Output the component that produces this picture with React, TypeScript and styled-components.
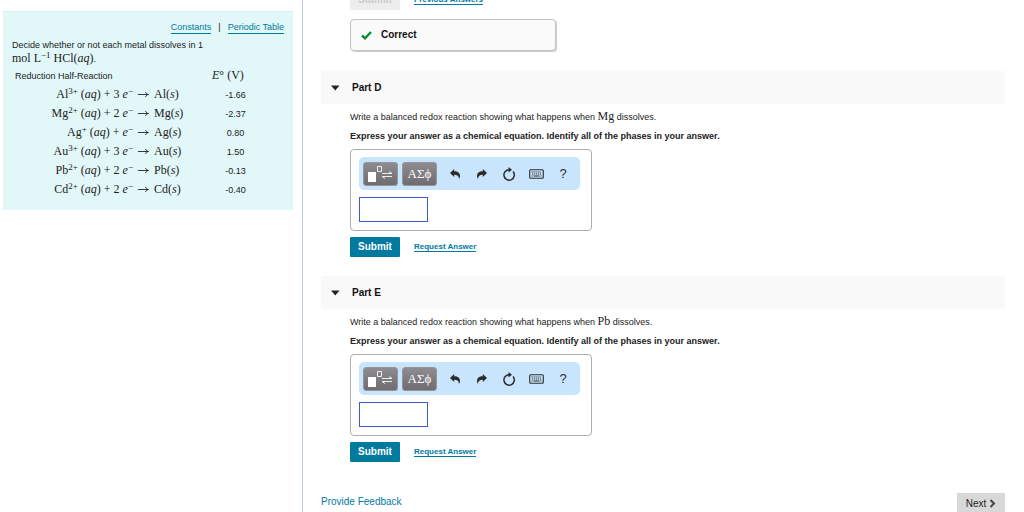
import React from "react";
import styled, { createGlobalStyle, css } from "styled-components";

const GlobalStyle = createGlobalStyle`
  *, *::before, *::after { box-sizing: border-box; }
  html, body, #root { height: 100%; }
  body {
    margin: 0;
    overflow: hidden;
    background: #fff;
    color: #222;
    font: 9px/12px "Liberation Sans", Arial, sans-serif;
  }
  button, input { font-family: inherit; }
`;

const teal = "#007a9f";

const Page = styled.div`
  display: flex;
  height: 100%;
`;

const Sidebar = styled.aside`
  flex: 0 0 303px;
  padding: 11px 9px 0 3px;
  border-right: 1px solid #b8cbdc;
`;

const InfoPanel = styled.section`
  padding: 10px 9px 11px;
  border-top: 1px solid #d5eeee;
  background: #e1f7f8;
`;

const Resources = styled.nav`
  display: flex;
  justify-content: flex-end;
  gap: 7px;
  line-height: 11px;
`;

const linkStyle = css`
  color: ${teal};
  text-decoration: none;
`;

const ResourceLink = styled.a`
  ${linkStyle}
  border-bottom: 1px solid ${teal};
`;

const Prompt = styled.p`
  margin: 5px 0 0;
  line-height: 13px;
`;

const Chem = styled.span`
  font-family: "Liberation Serif", "Times New Roman", serif;
  font-size: 12px;
  line-height: 12px;
  white-space: nowrap;

  sup {
    font-size: 9px;
    line-height: 0;
    vertical-align: 4px;
  }
`;

const Reactions = styled.table`
  width: 247px;
  border-collapse: collapse;
  table-layout: fixed;

  th, td {
    height: 19px;
    padding: 0;
    font-weight: normal;
  }
`;

const LabelHead = styled.th`
  && { padding-left: 3px; text-align: left; }
`;

const PotentialHead = styled.th`
  text-align: left;
`;

const Reactant = styled.td`
  text-align: right;
`;

const Arrow = styled.td`
  text-align: center;

  svg { display: block; margin: 0 auto; }
`;

const Product = styled.td`
  text-align: left;
`;

const Potential = styled.td`
  text-align: center;
`;

const Main = styled.main`
  flex: 1;
  min-width: 0;
  padding: 0 19px 0 18px;
`;

/* The column is scrolled: only the foot of the previous part shows. */
const Scrolled = styled.div`
  margin-top: -10px;
`;

const Indented = styled.div`
  padding-left: 29px;
`;

const Actions = styled.div`
  display: flex;
  align-items: center;
  gap: 14px;
`;

const SubmitButton = styled.button`
  width: 50px;
  height: 20px;
  padding: 0;
  border: 0;
  border-radius: 1px;
  background: ${teal};
  color: #fff;
  font-size: 10px;
  font-weight: bold;
  line-height: 20px;

  &:disabled {
    background: #ededed;
    color: #ccc;
  }
`;

const AnswerLink = styled.a`
  ${linkStyle}
  border-bottom: 1px solid ${teal};
  font-size: 8px;
  font-weight: bold;
  line-height: 8px;
`;

const Correct = styled.div`
  display: flex;
  align-items: center;
  gap: 9px;
  width: 206px;
  height: 32px;
  margin: 9px 0 20px;
  padding-left: 10px;
  border: 1px solid #c4c4c4;
  border-radius: 4px;
  box-shadow: 1px 1px 1px #ccc;
  background: #fafafa;
  color: #111;
  font-size: 10px;
  font-weight: bold;
`;

const PartHeader = styled.h2`
  display: flex;
  align-items: center;
  gap: 12px;
  height: 33px;
  margin: 0;
  padding-left: 10px;
  background: #f9f9f9;
  color: #111;
  font-size: 10px;
  font-weight: bold;
`;

const PartSection = styled.section`
  & + & { margin-top: 19px; }
`;

const Question = styled.p`
  margin: 6px 0 7px;
  line-height: 12px;
`;

const Instruction = styled.label`
  display: block;
  font-weight: bold;
  line-height: 12px;
`;

const Editor = styled.div`
  width: 242px;
  height: 82px;
  margin: 7px 0 6px;
  padding: 7px 11px 0 8px;
  border: 1px solid #adadad;
  border-radius: 4px;
`;

const Toolbar = styled.div`
  display: flex;
  align-items: center;
  gap: 4px;
  height: 33px;
  padding-left: 4px;
  border-radius: 5px;
  background: #c9e4fd;
`;

const PaletteButton = styled.button`
  display: flex;
  align-items: center;
  justify-content: center;
  width: 35px;
  height: 24px;
  padding: 0;
  border: 1px solid #969696;
  border-radius: 3px;
  background: linear-gradient(#8e8c90, #6e6c70);
  color: #fff;
  font-family: "Liberation Serif", serif;
  font-size: 13px;
`;

const Tools = styled.div`
  display: flex;
  align-items: center;
  gap: 3px;
  margin-left: 2px;
`;

const ToolButton = styled.button`
  display: flex;
  align-items: center;
  justify-content: center;
  width: 24px;
  height: 24px;
  padding: 0;
  border: 0;
  background: none;
  color: #2c2c2c;
  font-size: 13px;
`;

const AnswerInput = styled.input`
  display: block;
  width: 69px;
  height: 25px;
  margin-top: 7px;
  padding: 0 4px;
  border: 1px solid #3c5ccf;
  background: #fff;
  font-size: 11px;
`;

const Footer = styled.footer`
  display: flex;
  align-items: flex-start;
  justify-content: space-between;
  margin-top: 31px;
`;

const Feedback = styled.a`
  ${linkStyle}
  margin-top: 3px;
  font-size: 10px;
`;

const NextButton = styled.button`
  display: flex;
  align-items: center;
  justify-content: center;
  gap: 3px;
  width: 48px;
  height: 20px;
  padding: 0;
  border: 0;
  border-radius: 1px;
  background: #d8d8d8;
  color: #222;
  font-size: 10px;
`;

type Half = { metal: string; charge: string; electrons: string; volts: string };

const reactions: Half[] = [
  { metal: "Al", charge: "3+", electrons: "3 ", volts: "-1.66" },
  { metal: "Mg", charge: "2+", electrons: "2 ", volts: "-2.37" },
  { metal: "Ag", charge: "+", electrons: "", volts: "0.80" },
  { metal: "Au", charge: "3+", electrons: "3 ", volts: "1.50" },
  { metal: "Pb", charge: "2+", electrons: "2 ", volts: "-0.13" },
  { metal: "Cd", charge: "2+", electrons: "2 ", volts: "-0.40" },
];

const TemplateIcon = () => (
  <svg width="27" height="18" viewBox="0 0 27 18" fill="none" aria-hidden="true">
    <path d="M1 7h8v10H1z" fill="#fff" />
    <path d="M10.500 1.500h4v5h-4z" stroke="#eee" />
    <path d="M15 8.500h10l-3-2M25 11.500H15l3 2" stroke="#eee" />
  </svg>
);

const ArrowIcon = ({ redo = false }: { redo?: boolean }) => (
  <svg width="12" height="12" viewBox="0 0 12 12" aria-hidden="true">
    <path
      d={
        redo
          ? "M11 5 6.800 1v2.300C3 3.300 1 5.200 1 8c0 1 .3 2 1 3 .1-3 1.700-4.200 4.800-4.200V9z"
          : "M1 5 5.200 1v2.300C9 3.300 11 5.200 11 8c0 1-.3 2-1 3-.1-3-1.700-4.200-4.800-4.200V9z"
      }
      fill="currentColor"
    />
  </svg>
);

const ResetIcon = () => (
  <svg width="14" height="14" viewBox="0 0 14 14" fill="none" aria-hidden="true">
    <path d="M11 4.500A5.200 5.200 0 1 1 7.500 2.800" stroke="currentColor" strokeWidth="1.500" />
    <path d="M6.500 0 10 2.800 6.500 5.500z" fill="currentColor" />
  </svg>
);

const KeyboardIcon = () => (
  <svg width="15" height="10" viewBox="0 0 15 10" fill="none" aria-hidden="true">
    <rect x=".7" y=".7" width="13.600" height="8.600" rx="1" stroke="currentColor" strokeWidth="1.100" />
    <path d="M2.500 3h10M3 5h10" stroke="currentColor" strokeDasharray="1.200 .8" />
    <path d="M2.500 7h1M4.500 7h6M11.500 7h1" stroke="currentColor" />
  </svg>
);

function Part({ name, metal }: { name: string; metal: string }) {
  const id = `answer-${metal}`;
  return (
    <PartSection>
      <PartHeader>
        <svg width="9" height="6" viewBox="0 0 9 6" aria-hidden="true">
          <path d="M0 .5h8.500L4.250 5.500z" fill="#222" />
        </svg>
        {name}
      </PartHeader>
      <Indented>
        <Question>
          Write a balanced redox reaction showing what happens when <Chem>{metal}</Chem> dissolves.
        </Question>
        <Instruction htmlFor={id}>
          Express your answer as a chemical equation. Identify all of the phases in your answer.
        </Instruction>
        <Editor>
          <Toolbar>
            <PaletteButton aria-label="Templates"><TemplateIcon /></PaletteButton>
            <PaletteButton aria-label="Symbols">ΑΣϕ</PaletteButton>
            <Tools>
              <ToolButton aria-label="Undo"><ArrowIcon /></ToolButton>
              <ToolButton aria-label="Redo"><ArrowIcon redo /></ToolButton>
              <ToolButton aria-label="Reset"><ResetIcon /></ToolButton>
              <ToolButton aria-label="Keyboard shortcuts"><KeyboardIcon /></ToolButton>
              <ToolButton aria-label="Help">?</ToolButton>
            </Tools>
          </Toolbar>
          <AnswerInput id={id} type="text" />
        </Editor>
        <Actions>
          <SubmitButton>Submit</SubmitButton>
          <AnswerLink href="#request">Request Answer</AnswerLink>
        </Actions>
      </Indented>
    </PartSection>
  );
}

export default function App() {
  return (
    <>
      <GlobalStyle />
      <Page>
        <Sidebar>
          <InfoPanel>
            <Resources>
              <ResourceLink href="#constants">Constants</ResourceLink>
              <span>|</span>
              <ResourceLink href="#periodic-table">Periodic Table</ResourceLink>
            </Resources>
            <Prompt>
              Decide whether or not each metal dissolves in 1<br />
              <Chem>mol L<sup>−1</sup> HCl(<i>aq</i>)</Chem>.
            </Prompt>
            <Reactions>
              <colgroup>
                <col width="121" />
                <col width="21" />
                <col width="58" />
                <col width="47" />
              </colgroup>
              <thead>
                <tr>
                  <LabelHead colSpan={3}>Reduction Half-Reaction</LabelHead>
                  <PotentialHead><Chem><i>E</i>° (V)</Chem></PotentialHead>
                </tr>
              </thead>
              <tbody>
                {reactions.map(({ metal, charge, electrons, volts }) => (
                  <tr key={metal}>
                    <Reactant>
                      <Chem>
                        {metal}<sup>{charge}</sup> (<i>aq</i>) + {electrons}<i>e</i><sup>−</sup>
                      </Chem>
                    </Reactant>
                    <Arrow>
                      <svg width="11" height="7" viewBox="0 0 11 7" fill="none" role="img" aria-label="yields">
                        <path d="M0 3.500h10M7.500 1C8 2.500 9 3.200 10.500 3.500 9 3.800 8 4.500 7.500 6" stroke="#222" strokeWidth=".9" />
                      </svg>
                    </Arrow>
                    <Product><Chem>{metal}(<i>s</i>)</Chem></Product>
                    <Potential>{volts}</Potential>
                  </tr>
                ))}
              </tbody>
            </Reactions>
          </InfoPanel>
        </Sidebar>
        <Main>
          <Scrolled>
            <Indented>
              <Actions>
                <SubmitButton disabled>Submit</SubmitButton>
                <AnswerLink href="#previous">Previous Answers</AnswerLink>
              </Actions>
              <Correct>
                <svg width="11" height="9" viewBox="0 0 11 9" fill="none" aria-hidden="true">
                  <path d="M1 4.500 4 7.300 10 1" stroke="#078a3c" strokeWidth="2.400" />
                </svg>
                Correct
              </Correct>
            </Indented>
            <Part name="Part D" metal="Mg" />
            <Part name="Part E" metal="Pb" />
            <Footer>
              <Feedback href="#feedback">Provide Feedback</Feedback>
              <NextButton>
                Next
                <svg width="7" height="9" viewBox="0 0 7 9" fill="none" aria-hidden="true">
                  <path d="M1.500 1 5 4.500 1.500 8" stroke="#444" strokeWidth="2" />
                </svg>
              </NextButton>
            </Footer>
          </Scrolled>
        </Main>
      </Page>
    </>
  );
}
